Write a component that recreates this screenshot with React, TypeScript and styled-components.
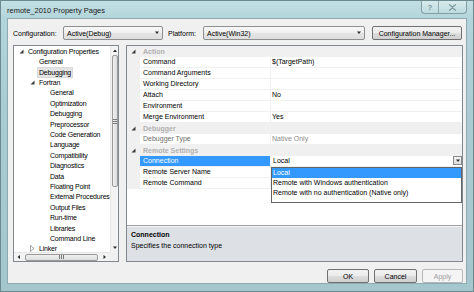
import styled, { createGlobalStyle } from 'styled-components';

const GlobalStyle = createGlobalStyle`
 html, body {
  margin: 0;
  padding: 0;
  background: #a6cad0;
 }
 body {
  font-family: "Liberation Sans", Arial, sans-serif;
  font-size: 7px;
  color: #000;
 }
 #root {
  width: 474px;
  height: 292px;
 }
`;

interface TreeItem {
 label: string;
 level: number;
 expander?: 'open' | 'closed';
 selected?: boolean;
}

interface PropRow {
 name: string;
 value?: string;
 category?: boolean;
 readOnly?: boolean;
 selected?: boolean;
}

const treeItems: TreeItem[] = [
 { label: 'Configuration Properties', level: 0, expander: 'open' },
 { label: 'General', level: 1 },
 { label: 'Debugging', level: 1, selected: true },
 { label: 'Fortran', level: 1, expander: 'open' },
 { label: 'General', level: 2 },
 { label: 'Optimization', level: 2 },
 { label: 'Debugging', level: 2 },
 { label: 'Preprocessor', level: 2 },
 { label: 'Code Generation', level: 2 },
 { label: 'Language', level: 2 },
 { label: 'Compatibility', level: 2 },
 { label: 'Diagnostics', level: 2 },
 { label: 'Data', level: 2 },
 { label: 'Floating Point', level: 2 },
 { label: 'External Procedures', level: 2 },
 { label: 'Output Files', level: 2 },
 { label: 'Run-time', level: 2 },
 { label: 'Libraries', level: 2 },
 { label: 'Command Line', level: 2 },
 { label: 'Linker', level: 1, expander: 'closed' },
];

const propRows: PropRow[] = [
 { name: 'Action', category: true },
 { name: 'Command', value: '$(TargetPath)' },
 { name: 'Command Arguments' },
 { name: 'Working Directory' },
 { name: 'Attach', value: 'No' },
 { name: 'Environment' },
 { name: 'Merge Environment', value: 'Yes' },
 { name: 'Debugger', category: true },
 { name: 'Debugger Type', value: 'Native Only', readOnly: true },
 { name: 'Remote Settings', category: true },
 { name: 'Connection', value: 'Local', selected: true },
 { name: 'Remote Server Name' },
 { name: 'Remote Command' },
];

const connectionOptions = [
 'Local',
 'Remote with Windows authentication',
 'Remote with no authentication (Native only)',
];

// small glyphs
const OpenArrow = () => (
 <svg width="5" height="5" viewBox="0 0 5 5">
  <polygon points="4.5,0.5 4.5,4.5 0.5,4.5" fill="#3c3c3c" />
 </svg>
);

const ClosedArrow = () => (
 <svg width="5" height="7" viewBox="0 0 5 7">
  <polygon points="0.5,0.5 4,3.5 0.5,6.5" fill="none" stroke="#8a8a8a" strokeWidth="0.8" />
 </svg>
);

const Caret = ({ dir }: { dir: 'up' | 'down' | 'left' | 'right' }) => {
 const pts = {
  up: '0,3 2,0.5 4,3',
  down: '0,0.5 2,3 4,0.5',
  left: '3,0 0.5,2 3,4',
  right: '0.5,0 3,2 0.5,4',
 }[dir];
 const w = dir === 'up' || dir === 'down' ? 4 : 3.5;
 const h = dir === 'up' || dir === 'down' ? 3.5 : 4;
 return (
  <svg width={w} height={h} viewBox={`0 0 ${w} ${h}`}>
   <polygon points={pts} fill="#2b2b2b" />
  </svg>
 );
};

const CloseGlyph = () => (
 <svg width="9" height="7" viewBox="0 0 9 7">
  <path
   d="M1 0.5 L4.5 3 L8 0.5 M1 6.5 L4.5 4 L8 6.5"
   fill="none"
   stroke="#7c979b"
   strokeWidth="1.2"
  />
 </svg>
);

export default function App() {
 return (
  <>
   <GlobalStyle />
   <Window>
    <TitleBar>
     <TitleText>remote_2010 Property Pages</TitleText>
     <CaptionButtons>
      <CaptionButton $width={16}>?</CaptionButton>
      <CaptionButton $width={27}>
       <CloseGlyph />
      </CaptionButton>
     </CaptionButtons>
    </TitleBar>

    <Client>
     <ConfigRow>
      <FieldLabel $width={50}>Configuration:</FieldLabel>
      <Combo $width={100}>
       <span>Active(Debug)</span>
       <Caret dir="down" />
      </Combo>
      <FieldLabel $width={35} $gap={5}>
       Platform:
      </FieldLabel>
      <Combo $width={162}>
       <span>Active(Win32)</span>
       <Caret dir="down" />
      </Combo>
      <Button $width={90} $gap={7}>
       Configuration Manager...
      </Button>
     </ConfigRow>

     <Body>
      <Tree>
       <TreeContent>
        {treeItems.map((item, index) => (
         <TreeRow key={index} $level={item.level}>
          <Expander>
           {item.expander === 'open' && <OpenArrow />}
           {item.expander === 'closed' && <ClosedArrow />}
          </Expander>
          <TreeLabel $selected={item.selected}>{item.label}</TreeLabel>
         </TreeRow>
        ))}
       </TreeContent>
       <VScroll>
        <ScrollArrow>
         <Caret dir="up" />
        </ScrollArrow>
        <VThumb>
         <Grip $vertical />
        </VThumb>
        <ScrollSpacer />
        <ScrollArrow>
         <Caret dir="down" />
        </ScrollArrow>
       </VScroll>
       <HScroll>
        <ScrollArrow $wide>
         <Caret dir="left" />
        </ScrollArrow>
        <HThumb>
         <Grip />
        </HThumb>
        <ScrollSpacer />
        <ScrollArrow $wide>
         <Caret dir="right" />
        </ScrollArrow>
       </HScroll>
       <ScrollCorner />
      </Tree>

      <PropertyPane>
       <GridBody>
        {propRows.map((row) =>
         row.category ? (
          <CategoryRow key={row.name}>
           <Gutter>
            <OpenArrow />
           </Gutter>
           <CategoryName>{row.name}</CategoryName>
          </CategoryRow>
         ) : (
          <GridRow key={row.name}>
           <Gutter />
           <NameCell $selected={row.selected} $readOnly={row.readOnly}>
            {row.name}
           </NameCell>
           <ValueCell $readOnly={row.readOnly}>
            {row.selected ? (
             <InlineCombo>
              <span>{row.value}</span>
              <InlineComboButton>
               <Caret dir="down" />
              </InlineComboButton>
             </InlineCombo>
            ) : (
             row.value
            )}
           </ValueCell>
          </GridRow>
         ),
        )}

        <DropList>
         {connectionOptions.map((opt, i) => (
          <DropItem key={opt} $active={i === 0}>
           {opt}
          </DropItem>
         ))}
        </DropList>
       </GridBody>

       <Description>
        <DescTitle>Connection</DescTitle>
        <div>Specifies the connection type</div>
       </Description>
      </PropertyPane>
     </Body>

     <Footer>
      <Button $width={42}>OK</Button>
      <Button $width={43}>Cancel</Button>
      <Button $width={41} $disabled>
       Apply
      </Button>
     </Footer>
    </Client>
   </Window>
  </>
 );
}

const Window = styled.div`
 width: 474px;
 height: 292px;
 box-sizing: border-box;
 display: flex;
 flex-direction: column;
 padding: 0 6px 7px 6px;
 border: 1px solid #6b8a90;
 background: linear-gradient(180deg, #c2dfe3 0%, #b2d5db 6%, #a9ccd2 40%, #a3c7cd 100%);
`;

const TitleBar = styled.div`
 height: 17px;
 display: flex;
 align-items: flex-start;
 justify-content: space-between;
`;

const TitleText = styled.div`
 font-size: 7.5px;
 line-height: 20px;
 color: #1a1a1a;
`;

const CaptionButtons = styled.div`
 display: flex;
 height: 12px;
 border: 1px solid rgba(70, 100, 106, 0.55);
 border-top: none;
 border-radius: 0 0 4px 4px;
 background: linear-gradient(180deg, rgba(255, 255, 255, 0.35), rgba(255, 255, 255, 0.1));
 overflow: hidden;
`;

const CaptionButton = styled.div<{ $width: number }>`
 width: ${(p) => p.$width}px;
 display: flex;
 align-items: center;
 justify-content: center;
 font-size: 8px;
 color: #7c979b;
 font-weight: bold;

 & + & {
  border-left: 1px solid rgba(70, 100, 106, 0.45);
 }
`;

const Client = styled.div`
 flex: 1;
 display: flex;
 flex-direction: column;
 padding: 8px 4px 1px 6px;
 background: #f0f0f0;
 box-shadow: inset 0 0 0 1px #8eaab0;
`;

const ConfigRow = styled.div`
 height: 14px;
 display: flex;
 align-items: center;
 margin-bottom: 5px;
`;

const FieldLabel = styled.div<{ $width: number; $gap?: number }>`
 width: ${(p) => p.$width}px;
 margin-left: ${(p) => p.$gap ?? 0}px;
 flex-shrink: 0;
`;

const Combo = styled.div<{ $width: number }>`
 width: ${(p) => p.$width}px;
 height: 14px;
 box-sizing: border-box;
 display: flex;
 align-items: center;
 justify-content: space-between;
 padding: 0 3px 0 3px;
 border: 1px solid #8e8f8f;
 border-radius: 2px;
 background: linear-gradient(180deg, #f8f8f8 0%, #efefef 50%, #e4e4e4 51%, #dedede 100%);
`;

const Button = styled.div<{ $width: number; $disabled?: boolean; $gap?: number }>`
 width: ${(p) => p.$width}px;
 margin-left: ${(p) => p.$gap ?? 0}px;
 height: 14px;
 box-sizing: border-box;
 display: flex;
 align-items: center;
 justify-content: center;
 border: 1px solid ${(p) => (p.$disabled ? '#b5b9bc' : '#707070')};
 border-radius: 2px;
 color: ${(p) => (p.$disabled ? '#a0a0a0' : '#000')};
 background: ${(p) =>
  p.$disabled
   ? '#f4f4f4'
   : 'linear-gradient(180deg, #f2f2f2 0%, #ebebeb 50%, #dddddd 51%, #cfcfcf 100%)'};
 flex-shrink: 0;
`;

const Body = styled.div`
 height: 217px;
 display: flex;
 gap: 7px;
`;

const Tree = styled.div`
 width: 106px;
 box-sizing: border-box;
 border: 1px solid #828790;
 background: #fff;
 display: grid;
 grid-template-columns: 1fr 8px;
 grid-template-rows: 1fr 9px;
 overflow: hidden;
`;

const TreeContent = styled.div`
 overflow: hidden;
`;

const TreeRow = styled.div<{ $level: number }>`
 height: 10.42px;
 display: flex;
 align-items: center;
 padding-left: ${(p) => 4 + p.$level * 11}px;
 white-space: nowrap;
 letter-spacing: -0.2px;
`;

const Expander = styled.div`
 width: 9px;
 flex-shrink: 0;
 display: flex;
 align-items: center;
 padding-left: 1px;
 box-sizing: border-box;
`;

const TreeLabel = styled.span<{ $selected?: boolean }>`
 padding: 0 1px;
 line-height: 9px;
 background: ${(p) => (p.$selected ? '#e4e4e4' : 'transparent')};
 box-shadow: ${(p) => (p.$selected ? '0 0 0 1px #d9d9d9' : 'none')};
`;

const VScroll = styled.div`
 display: flex;
 flex-direction: column;
 background: #f3f3f3;
 border-left: 1px solid #e6e6e6;
`;

const HScroll = styled.div`
 display: flex;
 background: #f3f3f3;
 border-top: 1px solid #e6e6e6;
`;

const ScrollCorner = styled.div`
 background: #f0f0f0;
`;

const ScrollArrow = styled.div<{ $wide?: boolean }>`
 width: ${(p) => (p.$wide ? '10px' : 'auto')};
 height: ${(p) => (p.$wide ? 'auto' : '9px')};
 display: flex;
 align-items: center;
 justify-content: center;
 flex-shrink: 0;
`;

const ScrollSpacer = styled.div`
 flex: 1;
`;

const VThumb = styled.div`
 height: 132px;
 margin: 0 0.5px;
 box-sizing: border-box;
 border: 1px solid #9a9a9a;
 border-radius: 2px;
 background: linear-gradient(90deg, #f0f0f0, #dcdcdc);
 display: flex;
 align-items: center;
 justify-content: center;
`;

const HThumb = styled.div`
 width: 73px;
 margin: 0.5px 0 0.5px 1px;
 box-sizing: border-box;
 border: 1px solid #9a9a9a;
 border-radius: 2px;
 background: linear-gradient(180deg, #f0f0f0, #dcdcdc);
 display: flex;
 align-items: center;
 justify-content: center;
`;

const Grip = styled.div<{ $vertical?: boolean }>`
 width: ${(p) => (p.$vertical ? '4px' : '5px')};
 height: ${(p) => (p.$vertical ? '5px' : '4px')};
 background: ${(p) =>
  p.$vertical
   ? 'repeating-linear-gradient(180deg, #7a7a7a 0 1px, transparent 1px 2px)'
   : 'repeating-linear-gradient(90deg, #7a7a7a 0 1px, transparent 1px 2px)'};
`;

const PropertyPane = styled.div`
 flex: 1;
 box-sizing: border-box;
 border: 1px solid #828790;
 display: flex;
 flex-direction: column;
 background: #fff;
`;

const GridBody = styled.div`
 position: relative;
 flex: 1;
 background: #fff;
`;

const GridRow = styled.div`
 height: 11px;
 display: grid;
 grid-template-columns: 13px 130px 1fr;
 box-sizing: border-box;
 border-bottom: 1px solid #f0f0f0;
`;

const CategoryRow = styled.div`
 height: 11px;
 display: grid;
 grid-template-columns: 13px 1fr;
 background: #f0f0f0;
`;

const Gutter = styled.div`
 background: #f0f0f0;
 display: flex;
 align-items: center;
 justify-content: center;
`;

const CategoryName = styled.div`
 padding-left: 3px;
 line-height: 11px;
 color: #b0b0b0;
 font-weight: bold;
`;

const NameCell = styled.div<{ $selected?: boolean; $readOnly?: boolean }>`
 padding-left: 3px;
 line-height: 10px;
 white-space: nowrap;
 background: ${(p) => (p.$selected ? '#3399ff' : 'transparent')};
 color: ${(p) => (p.$selected ? '#fff' : p.$readOnly ? '#6d6d6d' : '#000')};
`;

const ValueCell = styled.div<{ $readOnly?: boolean }>`
 padding-left: 1px;
 line-height: 10px;
 white-space: nowrap;
 border-left: 1px solid #f0f0f0;
 color: ${(p) => (p.$readOnly ? '#8a8a8a' : '#000')};
`;

const InlineCombo = styled.div`
 height: 10px;
 display: flex;
 justify-content: space-between;
 padding-left: 1px;
`;

const InlineComboButton = styled.div`
 width: 9px;
 height: 9px;
 box-sizing: border-box;
 border: 1px solid #8a8a8a;
 background: linear-gradient(180deg, #f4f4f4, #dcdcdc);
 display: flex;
 align-items: center;
 justify-content: center;
`;

const DropList = styled.div`
 position: absolute;
 top: 121px;
 left: 144px;
 width: 191px;
 height: 36px;
 box-sizing: border-box;
 border: 1px solid #646464;
 background: #fff;
`;

const DropItem = styled.div<{ $active?: boolean }>`
 height: 10px;
 line-height: 10px;
 padding-left: 1px;
 background: ${(p) => (p.$active ? '#3399ff' : 'transparent')};
 color: ${(p) => (p.$active ? '#fff' : '#000')};
 white-space: nowrap;
`;

const Description = styled.div`
 height: 36px;
 box-sizing: border-box;
 border-top: 1px solid #a0a0a0;
 box-shadow: inset 0 1px 0 #f6f6f6;
 background: #dde1e6;
 padding: 3px 4px;
 line-height: 11px;
`;

const DescTitle = styled.div`
 font-weight: bold;
`;

const Footer = styled.div`
 margin-top: 7px;
 height: 14px;
 display: flex;
 justify-content: flex-end;
 gap: 5px;
`;
